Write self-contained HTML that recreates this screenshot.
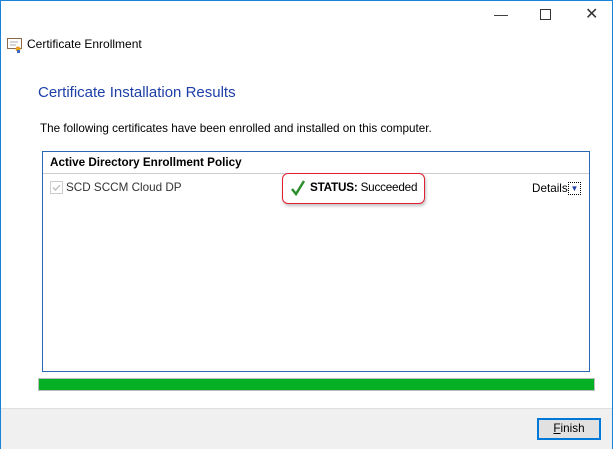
<!DOCTYPE html><html><head><style>
body{margin:0;width:613px;height:449px;overflow:hidden;background:#fff;font-family:"Liberation Sans",sans-serif;font-size:11.7px;color:#000;position:relative}
.a{position:absolute}
</style></head><body>
<div class="a" style="left:0;top:0;width:611px;height:447px;border:1px solid #1883d7"></div>
<div class="a" style="left:494px;top:6px;font-size:14px;color:#333">&#8212;</div>
<div class="a" style="left:540px;top:9px;width:9px;height:9px;border:1px solid #333"></div>
<div class="a" style="left:585px;top:4px;font-size:16px;color:#333">&#x2715;</div>
<svg class="a" style="left:7px;top:37px" width="16" height="16"><rect x="0.5" y="1.5" width="14" height="10" fill="#fff" stroke="#8a6a4a"/><line x1="3" y1="5" x2="11" y2="5" stroke="#aaa"/><line x1="3" y1="8" x2="9" y2="8" stroke="#aaa"/><circle cx="11" cy="12" r="2.5" fill="#e8a020"/><rect x="10" y="13" width="3" height="3" fill="#3a6ac0"/></svg>
<div class="a" style="left:27px;top:37px;font-size:12px">Certificate Enrollment</div>
<div class="a" style="left:38px;top:84px;font-size:15px;color:#1c3fa8">Certificate Installation Results</div>
<div class="a" style="left:40px;top:122px">The following certificates have been enrolled and installed on this computer.</div>
<div class="a" style="left:42px;top:151px;width:546px;height:219px;border:1px solid #2c67b5"></div>
<div class="a" style="left:43px;top:173px;width:546px;height:1px;background:#ccc"></div>
<div class="a" style="left:50px;top:156px;font-weight:bold">Active Directory Enrollment Policy</div>
<svg class="a" style="left:50px;top:181px" width="13" height="13"><rect x="0.5" y="0.5" width="12" height="12" fill="#fff" stroke="#ccc"/><path d="M3 6.5l2.5 2.5 4.5-5" fill="none" stroke="#bbb" stroke-width="1.3"/></svg>
<div class="a" style="left:66px;top:181px;color:#333">SCD SCCM Cloud DP</div>
<div class="a" style="left:282px;top:173px;width:141px;height:29px;border:1.5px solid #e02030;border-radius:6px;box-shadow:1px 2px 3px rgba(0,0,0,.25)"></div>
<svg class="a" style="left:291px;top:180px" width="14" height="16"><path d="M1 9l4 5 8-13" fill="none" stroke="#2f8f2f" stroke-width="2.5"/></svg>
<div class="a" style="left:310px;top:181px;letter-spacing:-0.2px"><b>STATUS:</b>&nbsp;Succeeded</div>
<div class="a" style="left:532px;top:182px">Details</div>
<div class="a" style="left:568px;top:182px;width:11px;height:11px;border:1px dotted #000;font-size:8px;color:#1c3fa8;text-align:center;line-height:11px">&#9660;</div>
<div class="a" style="left:38px;top:378px;width:555px;height:11px;background:#06b025;border:1px solid #bcbcbc"></div>
<div class="a" style="left:1px;top:408px;width:611px;height:40px;background:#f0f0f0;border-top:1px solid #dfdfdf"></div>
<div class="a" style="left:537px;top:418px;width:60px;height:18px;background:#e1e1e1;border:2px solid #0078d7;box-sizing:content-box;text-align:center;line-height:18px"><u>F</u>inish</div>
</body></html>
